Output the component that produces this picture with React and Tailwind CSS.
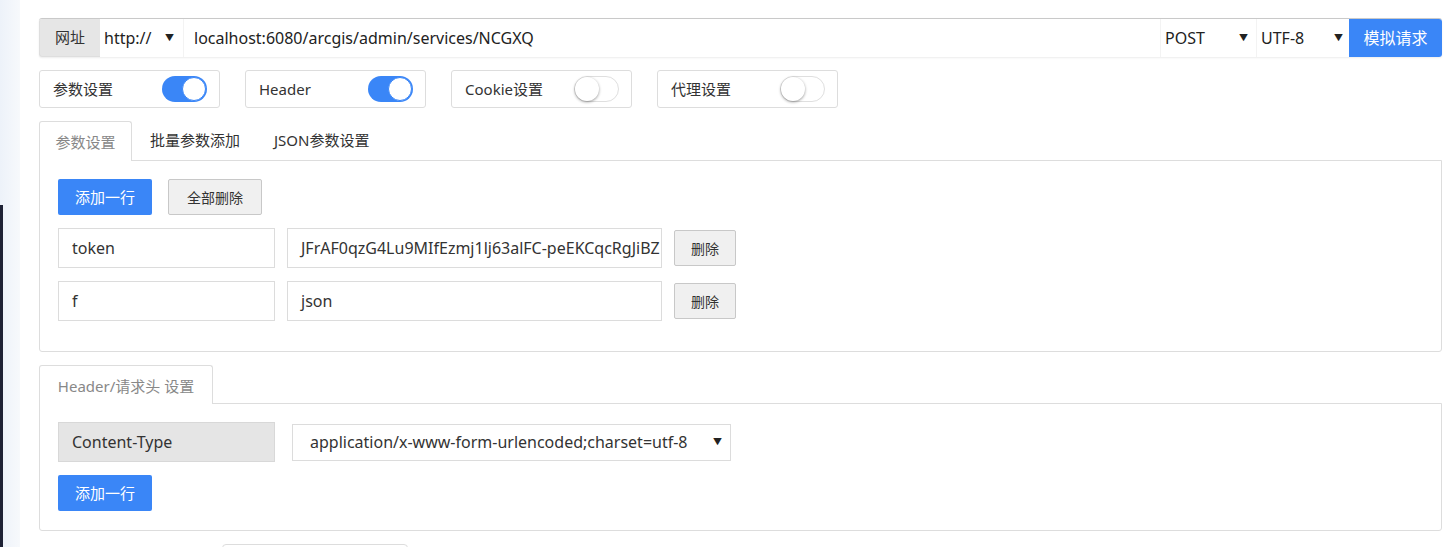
const font = { fontFamily: '"Noto Sans", "Noto Sans CJK SC", sans-serif' };

function Toggle({ on }) {
  if (on) {
    return (
      <span className="flex h-[26px] w-[45px] items-center justify-end rounded-full bg-[#3a86f7] pr-[1px]">
        <span className="h-[24px] w-[24px] rounded-full border border-[#3a86f7] bg-white" />
      </span>
    );
  }
  return (
    <span className="flex h-[26px] w-[45px] items-center rounded-full border border-[#dfdfdf] bg-white">
      <span className="h-[24px] w-[24px] rounded-full bg-white shadow-[0_1px_3px_rgba(0,0,0,0.4)]" />
    </span>
  );
}

function SwitchBox({ label, on }) {
  return (
    <div className="flex h-[38px] w-[181px] items-center justify-between rounded-[3px] border border-[#dddddd] pl-[13px] pr-[12px] text-[15px] text-[#333]">
      <span>{label}</span>
      <Toggle on={on} />
    </div>
  );
}

function SelectBox({ value, className }) {
  return (
    <div className={`flex items-center justify-between ${className}`}>
      <span>{value}</span>
      <span className="text-[9px] text-[#222]">▼</span>
    </div>
  );
}

function BlueButton({ children }) {
  return (
    <button className="h-[36px] w-[94px] rounded-[2px] bg-[#3a86f7] text-[15px] text-white">
      {children}
    </button>
  );
}

function ParamRow({ name, value }) {
  return (
    <div className="flex h-[40px] items-center">
      <div className="flex h-[40px] w-[217px] items-center border border-[#dcdcdc] px-[13px] text-[16px] text-[#333]">
        {name}
      </div>
      <div className="ml-[12px] flex h-[40px] w-[375px] items-center overflow-hidden whitespace-nowrap border border-[#dcdcdc] px-[13px] text-[16px] text-[#333]">
        {value}
      </div>
      <button className="ml-[12px] h-[36px] w-[62px] rounded-[2px] border border-[#c8c8c8] bg-[#f0f0f0] text-[14px] text-[#333]">
        删除
      </button>
    </div>
  );
}

export default function App() {
  return (
    <div className="flex h-[547px] w-full overflow-hidden bg-white" style={font}>
      <div className="flex w-[20px] shrink-0 flex-col bg-gradient-to-r from-[#edf2f9] to-[#f7f9fc]">
        <div className="h-[205px] shrink-0" />
        <div className="w-[3px] flex-1 bg-[#1e2235]" />
      </div>

      <div className="min-w-0 flex-1 pl-[19px] pr-[7px] pt-[18px]">
        {/* url bar */}
        <div className="flex h-[39px] items-stretch rounded-[3px] border-t border-[#c9c9c9] shadow-[0_1px_2px_rgba(0,0,0,0.08)] text-[16px] text-[#222]">
          <div className="flex w-[61px] items-center justify-center rounded-bl-[3px] rounded-tl-[3px] border-b border-l border-[#dedede] bg-[#e6e6e6] text-[15px] text-[#333]">
            网址
          </div>
          <SelectBox value="http://" className="w-[83px] pl-[4px] pr-[9px]" />
          <div className="flex flex-1 items-center border-l border-[#f3f3f3] pl-[10px]">
            localhost:6080/arcgis/admin/services/NCGXQ
          </div>
          <SelectBox value="POST" className="w-[96px] border-l border-[#f3f3f3] pl-[4px] pr-[8px]" />
          <SelectBox value="UTF-8" className="w-[93px] border-l border-[#f3f3f3] pl-[4px] pr-[6px]" />
          <button className="w-[93px] rounded-br-[3px] rounded-tr-[3px] bg-[#3a86f7] text-[16px] text-white">
            模拟请求
          </button>
        </div>

        {/* switches */}
        <div className="mt-[13px] flex gap-[25px]">
          <SwitchBox label="参数设置" on />
          <SwitchBox label="Header" on />
          <SwitchBox label="Cookie设置" />
          <SwitchBox label="代理设置" />
        </div>

        {/* params tabs */}
        <div className="mt-[13px] flex h-[39px] items-stretch text-[15px]">
          <div className="relative -mb-px flex w-[93px] items-center justify-center rounded-t-[3px] border border-b-0 border-[#dddddd] bg-white pt-[2px] text-[#888]">
            参数设置
          </div>
          <div className="flex items-center pl-[18px] text-[#333]">批量参数添加</div>
          <div className="flex items-center pl-[34px] text-[#333]">JSON参数设置</div>
        </div>
        <div className="h-[192px] rounded-b-[3px] border border-[#dddddd] px-[18px] pt-[18px]">
          <div className="flex gap-[16px]">
            <BlueButton>添加一行</BlueButton>
            <button className="h-[36px] w-[94px] rounded-[2px] border border-[#c8c8c8] bg-[#f0f0f0] text-[14px] text-[#333]">
              全部删除
            </button>
          </div>
          <div className="mt-[13px] flex flex-col gap-[13px]">
            <ParamRow name="token" value="JFrAF0qzG4Lu9MIfEzmj1lj63alFC-peEKCqcRgJiBZ" />
            <ParamRow name="f" value="json" />
          </div>
        </div>

        {/* header tabs */}
        <div className="mt-[13px] flex h-[38px] items-stretch text-[15px]">
          <div className="relative -mb-px flex w-[174px] items-center justify-center rounded-t-[3px] border border-b-0 border-[#dddddd] bg-white pt-[2px] text-[#888]">
            Header/请求头 设置
          </div>
        </div>
        <div className="h-[128px] rounded-b-[3px] border border-[#dddddd] px-[18px] pt-[18px]">
          <div className="flex items-center">
            <div className="flex h-[40px] w-[217px] items-center border border-[#d8d8d8] bg-[#e5e5e5] px-[13px] text-[16px] text-[#333]">
              Content-Type
            </div>
            <SelectBox
              value="application/x-www-form-urlencoded;charset=utf-8"
              className="ml-[17px] h-[37px] w-[439px] border border-[#dcdcdc] pl-[17px] pr-[8px] text-[16px] text-[#333]"
            />
          </div>
          <div className="mt-[13px]">
            <BlueButton>添加一行</BlueButton>
          </div>
        </div>

        <div className="mt-[13px] ml-[183px] h-[20px] w-[186px] rounded-t-[4px] border border-[#dddddd]" />
      </div>
    </div>
  );
}
